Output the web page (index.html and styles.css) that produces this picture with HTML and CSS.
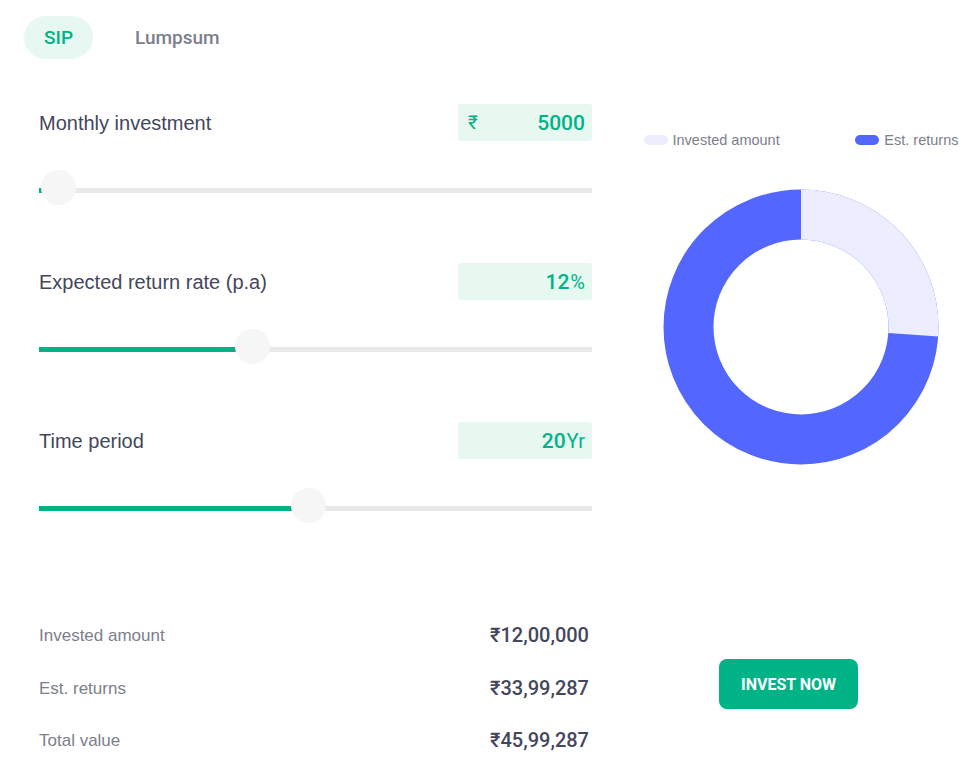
FILE: index.html
```html
<!DOCTYPE html>
<html lang="en">
<head>
<meta charset="utf-8">
<title>SIP Calculator</title>
<link rel="stylesheet" href="styles.css">
</head>
<body>
<div class="calc">
  <div class="tabs">
    <button class="tab active">SIP</button>
    <button class="tab">Lumpsum</button>
  </div>
  <div class="main">
    <div class="left">
      <div class="field">
        <div class="field-head">
          <span class="label">Monthly investment</span>
          <div class="box"><span class="box-cur">₹</span><span class="box-val">5000</span></div>
        </div>
        <div class="slider">
          <div class="track"><div class="fill" style="width:19px"></div></div>
          <div class="thumb" style="left:2px"></div>
        </div>
      </div>
      <div class="field">
        <div class="field-head">
          <span class="label">Expected return rate (p.a)</span>
          <div class="box"><span class="box-val">12</span><span class="box-unit">%</span></div>
        </div>
        <div class="slider">
          <div class="track"><div class="fill" style="width:213px"></div></div>
          <div class="thumb" style="left:196px"></div>
        </div>
      </div>
      <div class="field">
        <div class="field-head">
          <span class="label">Time period</span>
          <div class="box"><span class="box-val">20</span><span class="box-unit">Yr</span></div>
        </div>
        <div class="slider">
          <div class="track"><div class="fill" style="width:269px"></div></div>
          <div class="thumb" style="left:252px"></div>
        </div>
      </div>
      <div class="summary">
        <div class="row"><span class="row-label">Invested amount</span><span class="row-val">₹12,00,000</span></div>
        <div class="row"><span class="row-label">Est. returns</span><span class="row-val">₹33,99,287</span></div>
        <div class="row"><span class="row-label">Total value</span><span class="row-val">₹45,99,287</span></div>
      </div>
    </div>
    <div class="right">
      <div class="legend">
        <div class="legend-item"><span class="swatch swatch-light"></span>Invested amount</div>
        <div class="legend-item"><span class="swatch swatch-blue"></span>Est. returns</div>
      </div>
      <svg class="donut" viewBox="0 0 276 276" width="276" height="276">
        <circle cx="138" cy="138" r="112.5" fill="none" stroke="#5367ff" stroke-width="50"/>
        <circle cx="138" cy="138" r="112.5" fill="none" stroke="#eceeff" stroke-width="50" stroke-dasharray="184.4 800" transform="rotate(-90 138 138)"/>
      </svg>
      <button class="invest">INVEST NOW</button>
    </div>
  </div>
</div>
</body>
</html>
```

FILE: styles.css
```css
* {
  box-sizing: border-box;
  margin: 0;
  padding: 0;
}

body {
  background: #ffffff;
  font-family: "Liberation Sans", Arial, "Noto Sans", sans-serif;
  color: #44475b;
  width: 976px;
  height: 770px;
  overflow: hidden;
}

.calc {
  padding: 16px 0 0 24px;
}

.tabs {
  display: flex;
  gap: 22px;
}

.tab {
  font-family: Roboto, "Liberation Sans", sans-serif;
  font-size: 19px;
  font-weight: 500;
  color: #7c7e8c;
  background: none;
  border: none;
  height: 43px;
  padding: 0 20px;
  border-radius: 22px;
}

.tab.active {
  background: #e6f8f1;
  color: #00b386;
}

.main {
  display: flex;
  margin-top: 45px;
  padding-left: 15px;
}

.left {
  width: 553px;
  flex: none;
}

.field + .field {
  margin-top: 58px;
}

.field-head {
  display: flex;
  justify-content: space-between;
  align-items: center;
  height: 37px;
}

.label {
  font-size: 20px;
  color: #44475b;
  padding-top: 1px;
}

.box {
  width: 134px;
  height: 37px;
  background: #e7f8f1;
  border-radius: 3px;
  display: flex;
  align-items: center;
  justify-content: flex-end;
  padding: 0 7px 0 10px;
  color: #00b386;
  font-family: Roboto, "Liberation Sans", sans-serif;
}

.box-cur {
  margin-right: auto;
  font-size: 19px;
}

.box-val {
  font-size: 21px;
  font-weight: 500;
}

.box-unit {
  font-size: 20px;
  font-weight: 400;
  margin-left: 1px;
}

.slider {
  position: relative;
  height: 35px;
  margin-top: 29px;
  padding-top: 18px;
}

.track {
  height: 5px;
  background: #e9e9eb;
}

.fill {
  height: 100%;
  background: #00b386;
}

.thumb {
  position: absolute;
  top: 0;
  width: 35px;
  height: 35px;
  border-radius: 50%;
  background: #f6f6f6;
}

.summary {
  margin-top: 86px;
}

.row {
  height: 52.5px;
  display: flex;
  justify-content: space-between;
  align-items: center;
  padding-right: 3px;
}

.row-label {
  font-size: 17px;
  color: #7c7e8c;
  padding-top: 2px;
}

.row-val {
  font-family: Roboto, "Liberation Sans", sans-serif;
  font-size: 20px;
  font-weight: 500;
  color: #44475b;
}

.right {
  width: 350px;
  flex: none;
  margin-left: 34px;
  display: flex;
  flex-direction: column;
}

.legend {
  display: flex;
  justify-content: space-between;
  width: 315px;
  height: 20px;
  margin: 26px auto 0;
  align-items: center;
}

.legend-item {
  display: flex;
  align-items: center;
  gap: 5px;
  font-size: 14.5px;
  color: #7c7e8c;
}

.swatch {
  width: 24px;
  height: 10px;
  border-radius: 5px;
}

.swatch-light {
  background: #eceeff;
}

.swatch-blue {
  background: #5367ff;
}

.donut {
  display: block;
  margin: 39px auto 0;
}

.invest {
  margin: 194px 0 0 93px;
  width: 139px;
  height: 50px;
  border-radius: 8px;
  border: none;
  background: #00b386;
  color: #ffffff;
  font-family: Roboto, "Liberation Sans", sans-serif;
  font-size: 16px;
  font-weight: 700;
}
```
